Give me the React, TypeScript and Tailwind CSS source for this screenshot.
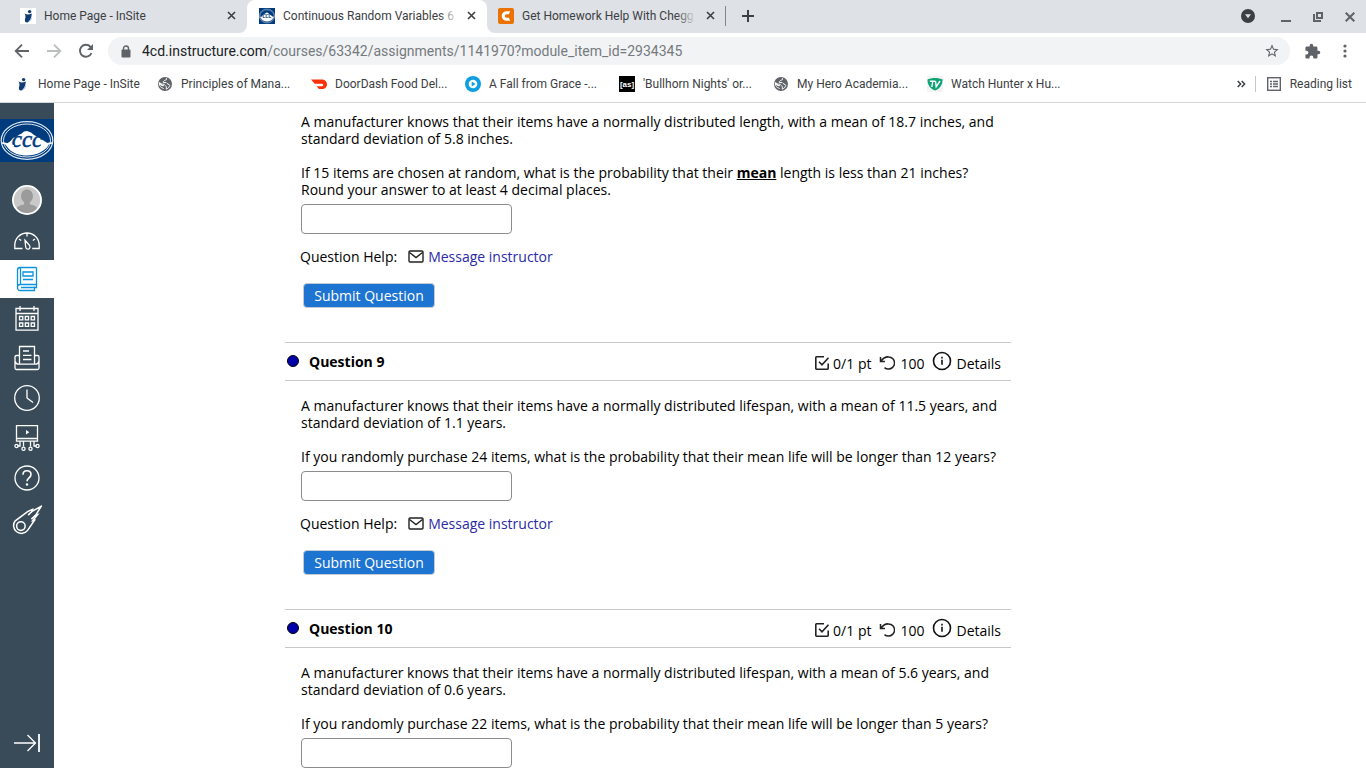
import type { ReactNode } from "react";

const InSiteIcon = ({ boxed = false }: { boxed?: boolean }) => (
  <svg width="16" height="16" viewBox="0 0 16 16" className="shrink-0">
    {boxed && <rect width="16" height="16" fill="#fff" />}
    <circle cx="9.600" cy="3.600" r="1.700" fill="#123a73" />
    <path
      d="M4 4.800c1.400 1.800 4.200 2.200 7.800.6-.3 3.600-1.300 7.600-4.600 9.200-2.400-.2-2.800-2.200-1.900-4.700.4-1.500.2-3.300-1.300-5.100z"
      fill="#123a73"
    />
    <path d="M8.600 13.800c1.500-.8 2.500-2.300 2.900-4.200" stroke="#8fb8e0" strokeWidth="1" fill="none" />
  </svg>
);

const GlobeIcon = () => (
  <svg width="16" height="16" viewBox="0 0 16 16" className="shrink-0">
    <circle cx="8" cy="8" r="7" fill="#5f6368" />
    <path
      d="M9.500 2.200c.3 1.300-.3 1.900-1.500 1.900-.7.200-.5 1.100-1.300 1.300-.9.200-.7 1.200.3 1.200h2.200c.8.300.9 1.500 1.900 1.600.9 0 1.300.4 1.600 1.100-.4 2-1.700 3.300-3.500 3.800-.3-1 .5-1.500.3-2.500-.4-.8-1.500-.6-1.700-1.400C7.600 8.300 6 8 4.700 8L2.300 6.600C2.100 8.500 3 10.500 4.500 11.700c.8.300 1.800.2 2.200 1.100"
      stroke="#fff"
      strokeWidth="1"
      fill="none"
    />
    <path d="M2.400 7.200L5 9.300l1.800.2" stroke="#fff" strokeWidth="1.300" fill="none" />
  </svg>
);

const CccLogo = ({ className }: { className: string }) => (
  <svg viewBox="0 0 54 43" preserveAspectRatio="none" className={className}>
    <rect width="54" height="43" fill="#003c7d" />
    <ellipse cx="27" cy="21.500" rx="25.800" ry="18.800" fill="none" stroke="#dce7f3" strokeWidth="1.200" />
    <ellipse cx="27" cy="21.500" rx="23.500" ry="16.500" fill="none" stroke="#dce7f3" strokeWidth="1" />
    <path
      d="M5 25c4-1 6-3 8-6 4-1 6-4 8-4l3-2.500 3-.5 4 1.500c2 2 4 3 6 4l12 7.500-2 3.500c-5 5-12 8-20 8S12 34 8 29z"
      fill="#fff"
    />
    <text
      x="27"
      y="28"
      textAnchor="middle"
      fontFamily="Liberation Serif, serif"
      fontStyle="italic"
      fontSize="23"
      fill="#003c7d"
      stroke="#003c7d"
      strokeWidth=".5"
    >
      ccc
    </text>
    <path d="M2 24c5 0 8 2 12 3M41 27c3-1 6-3 11-3" stroke="#fff" strokeWidth="1.500" fill="none" />
  </svg>
);

const CheggIcon = () => (
  <svg width="16" height="16" viewBox="0 0 16 16" className="shrink-0">
    <rect width="16" height="16" rx="2" fill="#eb7100" />
    <path d="M12.300 3.200H8.500a4.700 4.700 0 0 0 0 9.600h3.800l-1.500-3H8.700a1.800 1.800 0 0 1 0-3.600h2.100z" fill="#fff" />
  </svg>
);

const DoorDashIcon = () => (
  <svg width="16" height="16" viewBox="0 0 16 16" className="shrink-0">
    <path
      d="M0 3.500h10.500c3 0 5.500 2 5.500 4.700s-2 4.800-5 4.800H8L5.500 10.300h5c1 0 1.800-.5 1.800-1.300s-.7-1.300-1.800-1.300H3.700z"
      fill="#ff3008"
    />
  </svg>
);

const PlayIcon = () => (
  <svg width="16" height="16" viewBox="0 0 16 16" className="shrink-0">
    <circle cx="8" cy="8" r="8" fill="#0f9fe0" />
    <circle cx="8" cy="8" r="4.300" fill="#fff" />
    <path d="M6.700 5.500L10.500 8l-3.800 2.500z" fill="#0f9fe0" />
  </svg>
);

const AdultSwimIcon = () => (
  <svg width="16" height="16" viewBox="0 0 16 16" className="shrink-0">
    <rect width="16" height="16" fill="#000" />
    <text x="8" y="11" textAnchor="middle" fontFamily="Liberation Sans, sans-serif" fontWeight="700" fontSize="8" fill="#fff">
      [as]
    </text>
  </svg>
);

const TvIcon = () => (
  <svg width="16" height="16" viewBox="0 0 16 16" className="shrink-0">
    <rect width="16" height="16" fill="#f4f4f4" />
    <path d="M.5 3.500C5 1.500 11 1.500 15.500 3.500c.2 4.500-2.500 9.500-7.500 11C3 13 .3 8 .5 3.500z" fill="#0ba371" />
    <path d="M2.800 5.200h5.500M5.800 5.200L4.800 11M8.500 5.200l.7 5.600L13 5" stroke="#fff" strokeWidth="1.400" fill="none" />
  </svg>
);

const CloseButton = ({ label }: { label: string }) => (
  <button aria-label={label} className="flex size-4 shrink-0 items-center justify-center text-[#3c4043]">
    <svg width="9" height="9" viewBox="0 0 9 9">
      <path d="M1 1l7 7M8 1L1 8" stroke="currentColor" strokeWidth="1.600" />
    </svg>
  </button>
);

const Fade = ({ color }: { color: string }) => (
  <span className={`absolute inset-y-0 right-0 w-5 bg-linear-to-r from-transparent ${color}`} />
);

const TabStrip = () => (
  <div className="flex h-[33px] bg-[#dee1e6] text-xs text-[#3c4043]">
    <div className="w-[247px] shrink-0 bg-white">
      <div className="flex h-full items-center rounded-br-lg bg-[#dee1e6] pr-2 pb-[2px] pl-5">
        <InSiteIcon boxed />
        <span className="ml-2 flex-1">Home Page - InSite</span>
        <CloseButton label="Close Home Page" />
      </div>
    </div>
    <div className="w-[240px] shrink-0 bg-[#dee1e6]">
      <div className="flex h-full items-center rounded-t-lg bg-white pr-2 pb-[2px] pl-3">
        <CccLogo className="size-4 shrink-0" />
        <span className="relative ml-2 w-[176px] shrink-0 overflow-hidden whitespace-nowrap">
          Continuous Random Variables 6
          <Fade color="to-white" />
        </span>
        <span className="flex-1" />
        <CloseButton label="Close Continuous Random Variables" />
      </div>
    </div>
    <div className="min-w-0 flex-1 bg-white">
      <div className="flex h-full items-center rounded-bl-lg bg-[#dee1e6] pb-[2px] pl-[11px]">
        <CheggIcon />
        <span className="relative ml-2 w-[174px] shrink-0 overflow-hidden whitespace-nowrap">
          Get Homework Help With Chegg
          <Fade color="to-[#dee1e6]" />
        </span>
        <span className="w-[6px]" />
        <CloseButton label="Close Get Homework Help" />
        <span className="ml-[7px] h-5 w-px bg-[#80868b]" />
        <button aria-label="New tab" className="ml-[15px] text-[#3c4043]">
          <svg width="14" height="14" viewBox="0 0 14 14">
            <path d="M7 1v12M1 7h12" stroke="currentColor" strokeWidth="2" />
          </svg>
        </button>
        <div className="mr-[11px] ml-auto flex items-center text-[#5f6368]">
          <button aria-label="Search tabs">
            <svg width="14" height="14" viewBox="0 0 14 14">
              <circle cx="7" cy="7" r="7" fill="#3c4043" />
              <path d="M4 5.200h6L7 9.200z" fill="#dee1e6" />
            </svg>
          </button>
          <button aria-label="Minimize" className="mt-[2px] ml-[26px]">
            <svg width="10" height="10" viewBox="0 0 10 10">
              <path d="M0 9h10" stroke="currentColor" strokeWidth="2" />
            </svg>
          </button>
          <button aria-label="Restore" className="mt-[2px] ml-[22px]">
            <svg width="10" height="10" viewBox="0 0 10 10" fill="none" stroke="currentColor" strokeWidth="2">
              <path d="M4 1h5v5H4zM1 2v7h7" />
            </svg>
          </button>
          <button aria-label="Close" className="mt-[2px] ml-[22px]">
            <svg width="10" height="10" viewBox="0 0 10 10">
              <path d="M.7.7l8.600 8.600M9.300.7L.7 9.300" stroke="currentColor" strokeWidth="2" />
            </svg>
          </button>
        </div>
      </div>
    </div>
  </div>
);

const Toolbar = () => (
  <div className="flex h-9 items-center text-[#5f6368]">
    <button aria-label="Back" className="ml-[14px]">
      <svg width="16" height="16" viewBox="0 0 16 16" fill="none" stroke="currentColor" strokeWidth="1.800">
        <path d="M15 8H2.500M8 1.700L1.700 8 8 14.300" />
      </svg>
    </button>
    <button aria-label="Forward" className="ml-4 text-[#bbbdbf]">
      <svg width="16" height="16" viewBox="0 0 16 16" fill="none" stroke="currentColor" strokeWidth="1.800">
        <path d="M1 8h12.500M8 1.700L14.300 8 8 14.300" />
      </svg>
    </button>
    <button aria-label="Reload" className="ml-4">
      <svg width="16" height="16" viewBox="0 0 16 16" fill="none">
        <path d="M13.500 10a6 6 0 1 1-1-6.200L14 5.500" stroke="currentColor" strokeWidth="1.900" />
        <path d="M15 1v6H9z" fill="currentColor" />
      </svg>
    </button>
    <div className="ml-[14px] flex h-7 min-w-0 flex-1 items-center rounded-full bg-[#f1f3f4] pr-[10px] pl-[13px]">
      <svg width="10" height="13" viewBox="0 0 10 13" className="shrink-0">
        <path d="M2.500 5.500V3.500a2.500 2.500 0 0 1 5 0v2" stroke="#5f6368" strokeWidth="1.400" fill="none" />
        <rect x=".5" y="4.500" width="9" height="8" rx="1" fill="#5f6368" />
      </svg>
      <span className="ml-[11px] flex-1 text-sm text-[#757a7f]">
        <span className="text-[#202124]">4cd.instructure.com</span>
        /courses/63342/assignments/1141970?module_item_id=2934345
      </span>
      <button aria-label="Bookmark this page">
        <svg width="16" height="16" viewBox="0 0 24 24" fill="currentColor">
          <path d="M22 9.240l-7.190-.62L12 2 9.190 8.630 2 9.240l5.460 4.730L5.820 21 12 17.270 18.180 21l-1.630-7.030L22 9.240zM12 15.400l-3.760 2.270 1-4.280-3.320-2.880 4.380-.38L12 6.100l1.710 4.040 4.380.38-3.320 2.880 1 4.280L12 15.400z" />
        </svg>
      </button>
    </div>
    <button aria-label="Extensions" className="ml-[14px]">
      <svg width="17" height="17" viewBox="0 0 24 24" fill="currentColor">
        <path d="M20.500 11H19V7c0-1.100-.9-2-2-2h-4V3.500a2.500 2.500 0 0 0-5 0V5H4c-1.100 0-2 .9-2 2v3.800h1.500a2.700 2.700 0 0 1 0 5.400H2V20c0 1.100.9 2 2 2h3.800v-1.500a2.700 2.700 0 0 1 5.400 0V22H17c1.100 0 2-.9 2-2v-4h1.500a2.500 2.500 0 0 0 0-5z" />
      </svg>
    </button>
    <button aria-label="Menu" className="mr-[19px] ml-[22px]">
      <svg width="4" height="14" viewBox="0 0 4 14" fill="currentColor">
        <circle cx="2" cy="2" r="1.600" />
        <circle cx="2" cy="7" r="1.600" />
        <circle cx="2" cy="12" r="1.600" />
      </svg>
    </button>
  </div>
);

const bookmarks = [
  { title: "Principles of Mana...", icon: <GlobeIcon /> },
  { title: "DoorDash Food Del...", icon: <DoorDashIcon /> },
  { title: "A Fall from Grace -...", icon: <PlayIcon /> },
  { title: "'Bullhorn Nights' or...", icon: <AdultSwimIcon /> },
  { title: "My Hero Academia...", icon: <GlobeIcon /> },
  { title: "Watch Hunter x Hu...", icon: <TvIcon /> },
];

const BookmarksBar = () => (
  <div className="flex h-[34px] items-center border-b border-[#d5d7da] pb-[3px] pl-[14px] text-xs text-[#3c4043]">
    <a href="#" className="flex w-[143px] shrink-0 items-center gap-2 whitespace-nowrap">
      <InSiteIcon />
      Home Page - InSite
    </a>
    {bookmarks.map((item) => (
      <a key={item.title} href="#" className="flex w-[154px] shrink-0 items-center gap-2 whitespace-nowrap">
        {item.icon}
        {item.title}
      </a>
    ))}
    <button aria-label="More bookmarks" className="ml-auto">
      <svg width="9" height="8" viewBox="0 0 9 8" fill="none" stroke="#3c4043" strokeWidth="1.500">
        <path d="M.7 1L3.600 4 .7 7M4.700 1l2.900 3-2.900 3" />
      </svg>
    </button>
    <span className="ml-[9px] h-4 w-px bg-[#c4c7cb]" />
    <button className="mr-[14px] ml-[11px] flex items-center gap-[9px] whitespace-nowrap">
      <svg width="14" height="14" viewBox="0 0 14 14" fill="none" stroke="#5f6368">
        <rect x=".7" y=".7" width="12.600" height="12.600" strokeWidth="1.400" />
        <path d="M3 4.500h2M3 7h2M3 9.500h2M6 4.500h5M6 7h5M6 9.500h5" strokeWidth="1.300" />
      </svg>
      Reading list
    </button>
  </div>
);

interface NavItemProps {
  label: string;
  className: string;
  size?: number;
  children: ReactNode;
}

const NavItem = ({ label, className, size = 26, children }: NavItemProps) => (
  <a href="#" aria-label={label} className={`flex shrink-0 items-center justify-center ${className}`}>
    <svg width={size} height={size} viewBox="0 0 26 26" fill="none" stroke="currentColor" strokeWidth="1.300">
      {children}
    </svg>
  </a>
);

const Sidebar = () => (
  <nav className="flex w-[54px] shrink-0 flex-col bg-[#394b58] pt-4 text-white">
    <a href="#" aria-label="College home" className="mb-4 block">
      <CccLogo className="h-[43px] w-full" />
    </a>
    <NavItem label="Account" className="h-11" size={30}>
      <circle cx="13" cy="13" r="12" fill="#c9c9c9" stroke="none" />
      <path
        d="M3.500 20.500c1.500-2 4-3 7-3.500v-2c-2-1.600-2.800-3.500-2.600-5.800C8 6 10 3.800 13 3.800s5 2.200 5.100 5.400c.2 2.300-.6 4.200-2.600 5.800v2c3 .5 5.500 1.500 7 3.500A11.600 11.600 0 0 1 13 24.600 11.600 11.600 0 0 1 3.500 20.500z"
        fill="#9b9b9b"
        stroke="none"
      />
      <circle cx="13" cy="13" r="12.200" strokeWidth="1.600" />
    </NavItem>
    <NavItem label="Dashboard" className="h-[38px]">
      <path d="M8.500 20.500H.8v-3.300a12.200 12.200 0 0 1 24.400 0v3.300h-7M13 5v3.500M5 11l2.200 1.500M21 11l-2.200 1.500" />
      <path d="M11 12.300l4.500 5c1 1.700.3 3.700-1.300 3.900-1.700.1-2.500-1.200-2.600-2.900z" />
    </NavItem>
    <NavItem label="Courses" className="h-[38px] bg-white text-[#0d92e0]">
      <path d="M22.500 1.500H6c-1.700 0-2.500 1-2.500 2.500v17c0 2 1 3.500 2.500 3.500h14.500v-4M22.500 1.500v17H6c-1.500 0-2.500.8-2.500 2.200M6.500 1.500v17M20.500 21.500H7M22.500 18.500v3h-2" />
      <path d="M9 6h10v4H9zM9 13.500h10" />
    </NavItem>
    <NavItem label="Calendar" className="h-10">
      <path d="M2 3.500h22v21.700H2zM2 8.500h22M6 1v5M20 1v5" />
      <path d="M5.500 11.500h3.300v3.300H5.500zM11.300 11.500h3.300v3.300h-3.300zM17.200 11.500h3.300v3.300h-3.300zM5.500 18h3.300v3.300H5.500zM11.300 18h3.300v3.300h-3.300zM17.200 18h3.300v3.300h-3.300z" />
    </NavItem>
    <NavItem label="Inbox" className="h-10">
      <path d="M5.500 19V1.500h15V19M9 6h6M9 10.300h8.500M9 14.500h8.500" />
      <path d="M5.500 10.500H2.500c-1 0-1.500.8-1.500 1.700V23c0 1 .5 1.500 1.500 1.500h21c1 0 1.500-.5 1.500-1.500V12.200c0-1-.6-1.700-1.500-1.700h-3M1 16c.6 2.200 1.500 3.200 3.500 3.200h17c2 0 2.900-1 3.500-3.200" />
    </NavItem>
    <NavItem label="History" className="h-10">
      <circle cx="13" cy="13" r="12.300" />
      <path d="M13 4.500V13l6 4.500" />
    </NavItem>
    <NavItem label="Studio" className="h-10">
      <path d="M2.500.7h21v15.500h-21zM2.500 13.500h21M9.500 16v5.500M16.500 16v5.500M6 16v5H3.500M20 16v5h2.500" />
      <circle cx="2.500" cy="21" r="1.600" />
      <circle cx="9.500" cy="23.700" r="1.600" />
      <circle cx="16.500" cy="23.700" r="1.600" />
      <circle cx="23.500" cy="21" r="1.600" />
      <path d="M12 5l3.300 2.200L12 9.400z" fill="currentColor" stroke="none" />
    </NavItem>
    <NavItem label="Help" className="h-10">
      <circle cx="13" cy="13" r="12" />
      <path d="M9 9.700c0-2.300 1.700-3.900 4-3.900s4 1.500 4 3.700c0 3.300-4 3.500-4 6.800" strokeWidth="1.600" />
      <circle cx="13" cy="19.500" r="1.200" fill="currentColor" stroke="none" />
    </NavItem>
    <NavItem label="Impact" className="h-11" size={30}>
      <circle cx="7.700" cy="18.300" r="3.700" />
      <path d="M2.800 13.700L13.500 5.800l4.300-2-.6 1.800L25.300 1.200 20.500 8.800l1.700-.5-4.200 5.200 1.500-.3-6 8.800A6.600 6.600 0 1 1 2.800 13.700z" />
      <path d="M17.200 5.600l-3.200 3.200M20.500 8.800l-3.700 3.400" />
    </NavItem>
    <NavItem label="Expand navigation" className="mt-auto mb-[5px] h-10">
      <path d="M0 13h21.500M13.500 5l8 8-8 8" />
      <path d="M25 4v18" strokeWidth="1.800" />
    </NavItem>
  </nav>
);

const QuestionHeader = ({ number }: { number: number }) => (
  <div className="flex h-[39px] items-center border-y border-[#c8c8c8] pr-[10px] pl-[2px]">
    <span className="mb-[2px] size-3 rounded-full border border-black bg-[#0000ab]" />
    <h2 className="ml-[10px] flex-1 font-bold">Question {number}</h2>
    <div className="flex items-center pt-1">
      <svg width="16" height="16" viewBox="0 0 16 16" fill="none" stroke="#222" strokeWidth="1.600" className="mb-[2px]">
        <path d="M10 1.800H2.500a.7.7 0 0 0-.7.700v11a.7.700 0 0 0 .7.700h11a.7.700 0 0 0 .7-.7V8.500M5 6.800l3 3 6.500-7" />
      </svg>
      <span className="ml-[3px]">0/1 pt</span>
      <svg
        width="16"
        height="16"
        viewBox="0 0 16 16"
        fill="none"
        stroke="#222"
        strokeWidth="1.500"
        className="mb-[2px] ml-2"
      >
        <path d="M1.500 2v4.500H6M2 6.300C4 3 7 1.700 9.700 1.900a6 6 0 0 1-.4 12.100c-1.500 0-2.800-.5-3.800-1.400" />
      </svg>
      <span className="ml-[5px]">100</span>
      <button className="ml-2 flex items-center gap-1">
        <svg width="20" height="20" viewBox="0 0 20 20" fill="none" stroke="#111" strokeWidth="1.600" className="mb-[6px]">
          <circle cx="10" cy="10" r="8.500" />
          <path d="M10 8.800v5M10 5.800v1.800" />
        </svg>
        Details
      </button>
    </div>
  </div>
);

const AnswerBox = ({ number }: { number: number }) => (
  <input
    type="text"
    aria-label={`Answer for question ${number}`}
    className="mt-[6px] block h-[30px] w-[211px] rounded border border-[#8c8c8c] bg-white px-2"
  />
);

const QuestionActions = () => (
  <div className="mb-[34px] pl-[15px]">
    <div className="mt-[14px] flex items-center">
      Question Help:
      <svg width="16" height="14" viewBox="0 0 16 14" fill="none" stroke="#222" strokeWidth="1.400" className="mr-1 ml-[11px]">
        <rect x="1" y="1" width="14" height="11" rx="1" />
        <path d="M1.500 2.500L8 7.500l6.500-5" />
      </svg>
      <a href="#" className="text-[#2a2aa8]">
        Message instructor
      </a>
    </div>
    <button className="mt-[18px] ml-[3px] block h-[25px] w-[132px] rounded border border-[#c3cbd4] bg-[#1e74d1] text-white">
      Submit Question
    </button>
  </div>
);

const App = () => {
  return (
    <div className="flex h-screen flex-col overflow-hidden bg-white">
      <header className="shrink-0 font-[Roboto,sans-serif]">
        <TabStrip />
        <Toolbar />
        <BookmarksBar />
      </header>
      <div className="flex min-h-0 flex-1">
        <Sidebar />
        <main className="min-w-0 flex-1 overflow-hidden pt-[10px] pl-[231px] font-['Open_Sans',sans-serif] text-sm leading-[17px] text-black">
          <div className="max-w-[726px]">
            <section>
              <div className="pl-4">
                <p>
                  A manufacturer knows that their items have a normally distributed length, with a mean of 18.7 inches, and
                  <br />
                  standard deviation of 5.8 inches.
                </p>
                <p className="mt-[17px]">
                  If 15 items are chosen at random, what is the probability that their <b className="underline">mean</b> length
                  is less than 21 inches?
                  <br />
                  Round your answer to at least 4 decimal places.
                </p>
                <AnswerBox number={8} />
              </div>
              <QuestionActions />
            </section>
            <section>
              <QuestionHeader number={9} />
              <div className="pt-4 pl-4">
                <p>
                  A manufacturer knows that their items have a normally distributed lifespan, with a mean of 11.5 years, and
                  <br />
                  standard deviation of 1.1 years.
                </p>
                <p className="mt-[17px] whitespace-nowrap">
                  If you randomly purchase 24 items, what is the probability that their mean life will be longer than 12 years?
                </p>
                <AnswerBox number={9} />
              </div>
              <QuestionActions />
            </section>
            <section>
              <QuestionHeader number={10} />
              <div className="pt-4 pl-4">
                <p>
                  A manufacturer knows that their items have a normally distributed lifespan, with a mean of 5.6 years, and
                  <br />
                  standard deviation of 0.6 years.
                </p>
                <p className="mt-[17px] whitespace-nowrap">
                  If you randomly purchase 22 items, what is the probability that their mean life will be longer than 5 years?
                </p>
                <AnswerBox number={10} />
              </div>
            </section>
          </div>
        </main>
      </div>
    </div>
  );
};

export default App;
